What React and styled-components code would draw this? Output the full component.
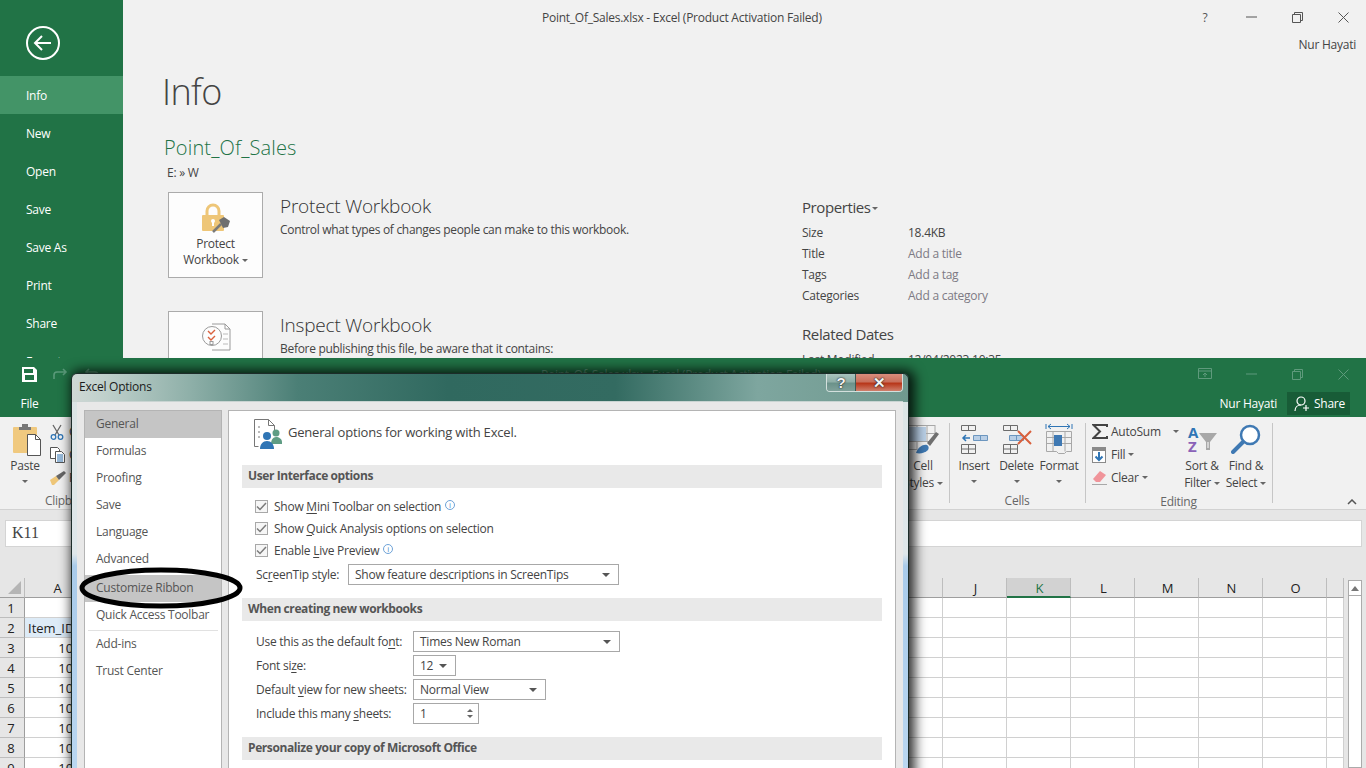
import React from "react";
import styled, { createGlobalStyle } from "styled-components";

const GlobalStyle = createGlobalStyle`
  html, body {
    margin: 0;
    padding: 0;
    width: 1366px;
    height: 768px;
    overflow: hidden;
    background: #f1f1f1;
  }
  * {
    box-sizing: border-box;
  }
  body {
    font-family: "Open Sans", "Noto Sans", "Liberation Sans", sans-serif;
    font-size: 12px;
    letter-spacing: -0.25px;
    color: #444;
  }
  u {
    text-underline-offset: 2px;
  }
`;

const Screen = styled.div`
  position: relative;
  width: 1366px;
  height: 768px;
  overflow: hidden;
  display: flex;
  flex-direction: column;
`;

/* backstage window */
const Backstage = styled.div`
  height: 358px;
  flex: none;
  display: flex;
  overflow: hidden;
  background: #f1f1f1;
`;

const Sidebar = styled.nav`
  width: 123px;
  flex: none;
  background: #217346;
  color: #fff;
  display: flex;
  flex-direction: column;
`;

const BackButton = styled.div`
  height: 76px;
  flex: none;
  padding: 26px 0 0 26px;
`;

const SideItem = styled.div`
  height: 38px;
  flex: none;
  padding-left: 26px;
  line-height: 40px;
  font-size: 12px;
  background: ${(p) => (p.$active ? "#439467" : "transparent")};
`;

const BackMain = styled.div`
  flex: 1;
  min-width: 0;
  display: flex;
  flex-direction: column;
`;

const BackTitleBar = styled.div`
  height: 34px;
  flex: none;
  display: flex;
  align-items: center;
  justify-content: space-between;
  padding-left: 419px;
`;

const WindowTitle = styled.div`
  font-size: 12px;
  color: #444;
  white-space: nowrap;
`;

const Controls = styled.div`
  display: flex;
  color: ${(p) => p.$color};
`;

const ControlButton = styled.div`
  width: 46px;
  height: 30px;
  display: flex;
  align-items: center;
  justify-content: center;
`;

const UserName = styled.div`
  height: 22px;
  line-height: 22px;
  flex: none;
  text-align: right;
  padding-right: 10px;
  white-space: nowrap;
`;

const InfoBody = styled.div`
  padding: 14px 0 0 39px;
  flex: none;
`;

const InfoHeading = styled.h1`
  margin: 0;
  font-weight: 300;
  font-size: 36px;
  line-height: 44px;
  letter-spacing: -0.6px;
  color: #444;
`;

const FileName = styled.h2`
  margin: 20px 0 0 2px;
  font-weight: 300;
  font-size: 20px;
  line-height: 28px;
  letter-spacing: 0.15px;
  color: #217346;
`;

const FilePath = styled.div`
  margin: 3px 0 0 5px;
  height: 19px;
  line-height: 16px;
  font-size: 12px;
`;

const InfoColumns = styled.div`
  margin-top: 8px;
  display: flex;
`;

const InfoLeft = styled.div`
  width: 640px;
  flex: none;
  padding-left: 6px;
  display: flex;
  flex-direction: column;
  gap: 33px;
`;

const InfoRow = styled.div`
  display: flex;
  gap: 17px;
`;

const ActionBox = styled.div`
  width: 95px;
  height: 86px;
  flex: none;
  background: #fdfdfd;
  border: 1px solid #ababab;
  display: flex;
  flex-direction: column;
  align-items: center;
  padding-top: 10px;
  line-height: 16px;
  text-align: center;
`;

const ActionIcon = styled.div`
  height: 33px;
  flex: none;
`;

const InfoRowHeading = styled.div`
  font-size: 19px;
  font-weight: 300;
  line-height: 28px;
  letter-spacing: -0.2px;
  color: #333;
`;

const InfoRowText = styled.div`
  margin-top: 2px;
  line-height: 16px;
  letter-spacing: -0.3px;
`;

const InfoRight = styled.div`
  padding-top: 3px;
`;

const PropHeading = styled.div`
  font-size: 15px;
  line-height: 24px;
  letter-spacing: -0.4px;
  color: #444;
  margin-top: ${(p) => p.$top || 0}px;
`;

const PropList = styled.div`
  margin-top: 3px;
  display: grid;
  grid-template-columns: 106px auto;
  grid-auto-rows: 21px;
  line-height: 21px;
`;

const PropValue = styled.span`
  color: ${(p) => (p.$plain ? "#444" : "#7d7a84")};
`;

/* excel window */
const ExcelWindow = styled.div`
  flex: 1;
  min-height: 0;
  display: flex;
  flex-direction: column;
  background: #e6e6e6;
  overflow: hidden;
`;

const GreenBar = styled.div`
  height: 59px;
  flex: none;
  background: #217346;
  color: #fff;
  display: flex;
  flex-direction: column;
`;

const GreenTop = styled.div`
  height: 32px;
  flex: none;
  display: flex;
  align-items: center;
  justify-content: space-between;
`;

const QuickAccess = styled.div`
  display: flex;
  align-items: center;
  gap: 16px;
  padding-left: 22px;
`;

const FadedTitle = styled.div`
  color: #5f9a7c;
  white-space: nowrap;
  margin-left: 442px;
  flex: 1;
`;

const GreenBottom = styled.div`
  height: 27px;
  flex: none;
  display: flex;
  align-items: center;
  justify-content: space-between;
  padding-right: 16px;
`;

const FileTab = styled.div`
  width: 59px;
  text-align: center;
  line-height: 27px;
`;

const AccountBox = styled.div`
  display: flex;
  align-items: center;
  gap: 10px;
`;

const ShareButton = styled.div`
  width: 63px;
  height: 23px;
  background: #185c37;
  display: flex;
  align-items: center;
  gap: 4px;
  padding-left: 7px;
`;

const Ribbon = styled.div`
  height: 93px;
  flex: none;
  background: #f1f1f1;
  border-bottom: 1px solid #d2d2d2;
  display: flex;
  position: relative;
`;

const RibbonGroup = styled.div`
  width: ${(p) => p.$w}px;
  flex: none;
  display: flex;
  flex-direction: column;
  position: relative;
  &::after {
    content: "";
    display: ${(p) => (p.$sep ? "block" : "none")};
    position: absolute;
    right: 0;
    top: 6px;
    bottom: 6px;
    width: 1px;
    background: #c6c6c6;
  }
`;

const GroupBody = styled.div`
  flex: 1;
  display: flex;
  padding: 3px 0 0 ${(p) => p.$pad || 0}px;
`;

const GroupLabel = styled.div`
  height: 19px;
  flex: none;
  padding-right: 2px;
  line-height: 22px;
  text-align: center;
  color: #666;
`;

const RibbonGap = styled.div`
  flex: ${(p) => (p.$w ? `0 0 ${p.$w}px` : "1")};
`;

const BigButton = styled.div`
  width: ${(p) => p.$w}px;
  flex: none;
  display: flex;
  flex-direction: column;
  align-items: center;
  line-height: 17px;
  text-align: center;
  white-space: nowrap;
`;

const BigIcon = styled.div`
  height: 37px;
  flex: none;
  display: flex;
  align-items: center;
  justify-content: center;
`;

const SmallColumn = styled.div`
  width: ${(p) => p.$w}px;
  flex: none;
  display: flex;
  flex-direction: column;
`;

const SmallRow = styled.div`
  height: 23px;
  flex: none;
  display: flex;
  align-items: center;
  white-space: nowrap;
`;

const SmallIcon = styled.div`
  width: 19px;
  flex: none;
  display: flex;
  align-items: center;
`;

const Caret = styled.span`
  display: inline-block;
  width: 0;
  height: 0;
  margin-left: ${(p) => p.$left ?? 3}px;
  vertical-align: middle;
  border-left: 3px solid transparent;
  border-right: 3px solid transparent;
  border-top: 3px solid #666;
`;

const DropCaret = styled(Caret)`
  margin: 6px 0 0 0;
`;

const CollapseCaret = styled.svg`
  position: absolute;
  right: 9px;
  bottom: 4px;
`;

const FormulaArea = styled.div`
  height: 68px;
  flex: none;
  padding: 10px 4px 0 5px;
`;

const FormulaBar = styled.div`
  height: 27px;
  background: #fff;
  border: 1px solid #d4d4d4;
  padding-left: 6px;
  font-family: "Liberation Serif", serif;
  font-size: 16px;
  line-height: 24px;
  letter-spacing: 0;
  color: #444;
`;

const SheetArea = styled.div`
  flex: 1;
  min-height: 0;
  display: flex;
  overflow: hidden;
`;

const SheetGrid = styled.div`
  width: 1344px;
  flex: none;
  display: grid;
  grid-template-columns: 25px 64px repeat(8, 106.75px) repeat(6, 64px) 17px;
  grid-auto-rows: 20px;
  font-size: 13px;
  letter-spacing: 0;
  color: #222;
`;

const Corner = styled.div`
  background: #e6e6e6;
  border-right: 1px solid #bdbdbd;
  border-bottom: 1px solid #9e9e9e;
  display: flex;
  align-items: flex-end;
  justify-content: flex-end;
  padding: 0 3px 3px 0;
`;

const ColHead = styled.div`
  text-align: center;
  line-height: 20px;
  padding-left: 2px;
  background: ${(p) => (p.$on ? "#d2d2d2" : "#e6e6e6")};
  color: ${(p) => (p.$on ? "#217346" : "#222")};
  border-right: 1px solid #bdbdbd;
  border-bottom: ${(p) => (p.$on ? "2px solid #217346" : "1px solid #9e9e9e")};
`;

const RowHead = styled.div`
  text-align: center;
  line-height: 21px;
  padding-right: 2px;
  background: #e6e6e6;
  border-right: 1px solid #9e9e9e;
  border-bottom: 1px solid #bdbdbd;
`;

const Cell = styled.div`
  background: ${(p) => (p.$tint ? "#ddebf7" : "#fff")};
  border-right: 1px solid #d0d0d0;
  border-bottom: 1px solid #d0d0d0;
  line-height: 21px;
  padding: 0 0 0 3px;
  text-align: ${(p) => (p.$right ? "right" : "left")};
  white-space: nowrap;
  overflow: hidden;
`;

const ScrollTrack = styled.div`
  width: 14px;
  margin: 2px 0 0 4px;
  flex: none;
  background: #fff;
  border: 1px solid #ababab;
`;

const ScrollUp = styled.div`
  height: 15px;
  border-bottom: 1px solid #ababab;
  display: flex;
  align-items: center;
  justify-content: center;
`;

/* options dialog */
const Dialog = styled.div`
  position: absolute;
  left: 71px;
  top: 373px;
  width: 838px;
  height: 420px;
  border-radius: 6px 6px 0 0;
  border: 1px solid #1c2c29;
  border-bottom: 0;
  box-shadow: 3px 0 12px 3px rgba(0, 0, 0, 0.8);
  padding: 0 5px;
  background:
    linear-gradient(90deg, #cfd8d5 0, #bfd0cb 4%, #8fb0a9 14%, #4b7f76 27%, #30695f 45%, #336b61 65%, #7ea69f 82%, #70998f 100%) top / 100% 28px no-repeat,
    linear-gradient(180deg, #dbe4e4 0, #dfe7ea 180px, #a9cbea 192px, #bcd8f1 100%);
  display: flex;
  flex-direction: column;
`;

const DialogTitleBar = styled.div`
  height: 27px;
  flex: none;
  display: flex;
  justify-content: space-between;
  padding-left: 2px;
`;

const DialogTitle = styled.div`
  font-size: 12px;
  line-height: 25px;
  color: #1b1b1b;
`;

const CaptionButtons = styled.div`
  display: flex;
  height: 18px;
  border: 1px solid #d3e0dd;
  border-top: 0;
  border-radius: 0 0 4px 4px;
  overflow: hidden;
`;

const CaptionButton = styled.div`
  width: ${(p) => p.$w}px;
  display: flex;
  align-items: center;
  justify-content: center;
  font-family: "Liberation Sans", sans-serif;
  font-weight: 700;
  font-size: 15px;
  letter-spacing: 0;
  color: #f4f4f4;
  text-shadow: 0 0 1px #222, 0 0 2px #222;
  background: ${(p) =>
    p.$danger
      ? "linear-gradient(180deg, #d98d7c 0, #c9705c 45%, #b8371a 55%, #cf7f6c 100%)"
      : "linear-gradient(180deg, #a9c3bd 0, #8fafa8 45%, #6b928a 55%, #7fa19a 100%)"};
  border-left: ${(p) => (p.$danger ? "1px solid #3f5a55" : "0")};
`;

const DialogClient = styled.div`
  flex: 1;
  min-height: 0;
  background: #e8e8e8;
  border-top: 1px solid #c9d4d2;
  display: flex;
  gap: 6px;
  padding: 8px 7px 0 7px;
`;

const NavPanel = styled.div`
  width: 138px;
  flex: none;
  background: #fff;
  border: 1px solid #b4b4b4;
  border-bottom: 0;
`;

const NavItem = styled.div`
  height: 27px;
  line-height: 26px;
  padding-left: 11px;
  color: #555;
  background: ${(p) => (p.$active ? "#c5c5c5" : "transparent")};
`;

const NavGroup = styled.div`
  margin-top: ${(p) => p.$top || 0}px;
`;

const NavRule = styled.div`
  height: 1px;
  margin: 1px 3px 0 3px;
  background: #e1e1e1;
`;

const Highlight = styled.svg`
  position: absolute;
  left: 6px;
  top: 192px;
  pointer-events: none;
`;

const ContentPanel = styled.div`
  flex: 1;
  min-width: 0;
  background: #fff;
  border: 1px solid #b4b4b4;
  border-bottom: 0;
  padding: 7px 13px 0 13px;
  color: #444;
`;

const ContentHeading = styled.div`
  height: 47px;
  display: flex;
  gap: 5px;
  padding-left: 12px;
  font-size: 13px;
  line-height: 29px;
  letter-spacing: -0.2px;
`;

const SectionBar = styled.div`
  height: 23px;
  background: #e9e9e9;
  padding-left: 6px;
  line-height: 22px;
  font-weight: 700;
  letter-spacing: -0.4px;
  color: #555;
  margin-top: ${(p) => p.$top || 0}px;
`;

const CheckList = styled.div`
  padding: 7px 0 0 13px;
  display: flex;
  flex-direction: column;
`;

const CheckRow = styled.div`
  height: 22px;
  display: flex;
  align-items: center;
  gap: 6px;
`;

const CheckBox = styled.div`
  width: 13px;
  height: 13px;
  flex: none;
  background: #f6f6f6;
  border: 1px solid #a8a8a8;
  display: flex;
  align-items: center;
  justify-content: center;
`;

const InfoDot = styled.span`
  width: 10px;
  height: 10px;
  margin: -3px 0 0 -2px;
  flex: none;
  border: 1px solid #6ea3d8;
  border-radius: 50%;
  color: #4a8bcb;
  font-size: 8px;
  line-height: 8px;
  text-align: center;
  letter-spacing: 0;
`;

const FormGrid = styled.div`
  display: grid;
  grid-template-columns: ${(p) => p.$label}px auto;
  justify-content: start;
  align-items: center;
  row-gap: 3px;
  padding: ${(p) => p.$top}px 0 0 14px;
`;

const SelectBox = styled.div`
  width: ${(p) => p.$w}px;
  height: 21px;
  background: #fff;
  border: 1px solid #a8a8a8;
  padding: 0 8px 0 6px;
  display: flex;
  align-items: center;
  justify-content: space-between;
  white-space: nowrap;
`;

const SelectArrow = styled.span`
  width: 0;
  height: 0;
  flex: none;
  border-left: 4px solid transparent;
  border-right: 4px solid transparent;
  border-top: 4px solid #555;
`;

const SpinArrows = styled.span`
  display: flex;
  flex-direction: column;
  gap: 3px;
  margin-right: -3px;
`;

const SpinArrow = styled.span`
  width: 0;
  height: 0;
  border-left: 3px solid transparent;
  border-right: 3px solid transparent;
  border-bottom: ${(p) => (p.$up ? "3px solid #666" : "0")};
  border-top: ${(p) => (p.$up ? "0" : "3px solid #666")};
`;

const WinIcons = {
  help: <span>?</span>,
  layout: (
    <svg width="14" height="12" viewBox="0 0 14 12" fill="none" stroke="currentColor">
      <path d="M.5.5h13v10H.5zM.5 3h13M7 9V5M5 7l2-2 2 2" />
    </svg>
  ),
  min: (
    <svg width="11" height="2" viewBox="0 0 11 2" stroke="currentColor">
      <path d="M0 1h11" />
    </svg>
  ),
  restore: (
    <svg width="11" height="11" viewBox="0 0 11 11" fill="none" stroke="currentColor">
      <path d="M.5 2.5h8v8h-8zM2.5 2.5v-2h8v8h-2" />
    </svg>
  ),
  close: (
    <svg width="11" height="11" viewBox="0 0 11 11" stroke="currentColor">
      <path d="M.5.5l10 10M10.5.5l-10 10" />
    </svg>
  ),
};

const BackArrow = () => (
  <svg width="34" height="34" viewBox="0 0 34 34" fill="none" stroke="#fff">
    <circle cx="17" cy="17" r="16" strokeWidth="2" />
    <path d="M9 17h16M16 10l-7 7 7 7" strokeWidth="2" />
  </svg>
);

const LockKey = () => (
  <svg width="32" height="31" viewBox="0 0 32 31">
    <path d="M7 13V8a6 6 0 0 1 12 0v5" fill="none" stroke="#eec678" strokeWidth="3" />
    <rect x="2" y="12" width="22" height="16" rx="1" fill="#eec678" />
    <circle cx="13" cy="18" r="2" fill="#fff" />
    <rect x="12" y="18" width="2" height="5" fill="#fff" />
    <path d="M13 29l8-8" stroke="#7a7a7a" strokeWidth="2.5" />
    <path d="M19 17l5-3 6 4-2 6-5 1z" fill="#6f6f6f" />
  </svg>
);

const InspectDoc = () => (
  <svg width="30" height="30" viewBox="0 0 30 30" fill="none">
    <path d="M11 2h13l5 5v21H11" stroke="#9a9a9a" />
    <path d="M24 2v5h5" stroke="#9a9a9a" />
    <circle cx="11" cy="14" r="9.5" fill="#fdfdfd" stroke="#9a9a9a" />
    <path d="M7 9l3 3 4-4M7 15l3 3 4-4" stroke="#d9603d" strokeWidth="1.4" />
    <rect x="9" y="19.5" width="3" height="3" stroke="#9a9a9a" />
    <path d="M22 12h5M22 17h5M22 22h5" stroke="#bbb" />
  </svg>
);

const SaveIcon = () => (
  <svg width="15" height="15" viewBox="0 0 15 15">
    <path d="M0 0h12l3 3v12H0z" fill="#fff" />
    <rect x="2" y="2" width="9" height="4" fill="#217346" />
    <rect x="3" y="8" width="9" height="5" fill="#217346" />
  </svg>
);

const FadedArrow = ({ flip }) => (
  <svg width="15" height="12" viewBox="0 0 15 12" fill="none" stroke="#5a9a7a" strokeWidth="1.6">
    <path d={flip ? "M14 11V7a3 3 0 0 0-3-3H2M5 1L2 4l3 3" : "M1 11V7a3 3 0 0 1 3-3h9M10 1l3 3-3 3"} />
  </svg>
);

const ShareIcon = () => (
  <svg width="16" height="16" viewBox="0 0 16 16" fill="none" stroke="#fff" strokeWidth="1.2">
    <circle cx="7" cy="5" r="4" />
    <path d="M1 15c0-4 3-6 6-6M9 12h6M12 9v6" />
  </svg>
);

const PasteIcon = () => (
  <svg width="34" height="34" viewBox="-4 0 34 34">
    <rect x="1" y="5" width="24" height="26" rx="1" fill="#f0c97f" />
    <path d="M7 5h12v3H7zM10 2h6v3h-6z" fill="#777" />
    <path d="M15.500 12.500h8l5 5v16h-13z" fill="#fff" stroke="#555" />
    <path d="M23.500 12.500v5h5" fill="none" stroke="#555" />
  </svg>
);

const CutIcon = () => (
  <svg width="14" height="16" viewBox="0 0 14 16" fill="none">
    <path d="M3 1l6 10M11 1L5 11" stroke="#666" strokeWidth="1.3" />
    <circle cx="3.500" cy="13" r="2.300" stroke="#2f75b5" strokeWidth="1.3" />
    <circle cx="10.500" cy="13" r="2.300" stroke="#2f75b5" strokeWidth="1.3" />
  </svg>
);

const CopyIcon = () => (
  <svg width="15" height="16" viewBox="0 0 15 16" fill="#fff" stroke="#555">
    <path d="M.5.5h7l2 2v9h-9z" />
    <path d="M5.500 4.500h6l3 3v8h-9z" />
    <path d="M7 8h6M7 10h6M7 12h6M7 14h6" stroke="#2f75b5" />
  </svg>
);

const BrushIcon = () => (
  <svg width="16" height="14" viewBox="0 0 16 14">
    <path d="M0 9l6-4 3 4-5 5H2z" fill="#eec678" />
    <path d="M6 5l8-5 2 2-7 7z" fill="#666" />
  </svg>
);

const StylesIcon = () => (
  <svg width="34" height="34" viewBox="0 0 34 34" fill="none">
    <path d="M1 3.500h28M1 11.500h28M1 19.500h22M1 27.500h10M1 3v25M11 3v25M21 3v17M29 3v10" stroke="#a8a8a8" />
    <rect x="2" y="5" width="18" height="14" fill="#b9cfe6" />
    <path d="M21 21l9-11 3 2-9 12z" fill="#6f6f6f" />
    <path d="M10 31c2-6 7-9 11-8 2 1 2 3 1 5-3 3-8 4-12 3z" fill="#3f79b3" />
  </svg>
);

const InsertIcon = () => (
  <svg width="28" height="30" viewBox="0 0 28 30" fill="none" stroke="#6c6c6c">
    <path d="M1.500 1.500h14v5h-14zM8.500 1.500v5" />
    <path d="M13.500 11.500h14v5h-14zM20.500 11.500v5" fill="#b9cfe6" stroke="#6c96bf" />
    <path d="M10 14H3M6 11l-3 3 3 3" stroke="#2f75b5" strokeWidth="1.5" />
    <path d="M1.500 20.500h14v9h-14zM8.500 20.500v9M1.500 25h14" />
  </svg>
);

const DeleteIcon = () => (
  <svg width="30" height="30" viewBox="0 0 30 30" fill="none" stroke="#6c6c6c">
    <path d="M1.500 1.500h14v5h-14zM8.500 1.500v5" />
    <path d="M7.500 11.500h14v5h-14zM14.500 11.500v5" fill="#b9cfe6" stroke="#6c96bf" />
    <path d="M1.500 20.500h14v9h-14zM8.500 20.500v9M1.500 25h14" />
    <path d="M16 7l13 13M29 7L16 20" stroke="#d9603d" strokeWidth="2" />
  </svg>
);

const FormatIcon = () => (
  <svg width="28" height="32" viewBox="0 0 28 32" fill="none">
    <path d="M1 1v5M27 1v5" stroke="#2f75b5" />
    <path d="M3 3.500h22M6 1l-3 2.500L6 6M22 1l3 2.500L22 6" stroke="#2f75b5" />
    <path d="M1.500 8.500h25v20h-5l-2 2h-6l-2-2h-10zM1.500 14.500h25M1.500 20.500h25M8 8.500v20M20 8.500v20" stroke="#a8a8a8" />
    <rect x="9" y="12" width="8" height="11" fill="#3f79b3" />
  </svg>
);

const FillIcon = () => (
  <svg width="14" height="16" viewBox="0 0 14 16" fill="none">
    <rect x=".5" y=".5" width="13" height="15" fill="#fff" stroke="#8a8a8a" />
    <rect x="1" y="1" width="12" height="3" fill="#8a8a8a" />
    <path d="M7 5v8M3.500 9.500L7 13l3.500-3.500" stroke="#2f75b5" strokeWidth="2" />
  </svg>
);

const EraserIcon = () => (
  <svg width="15" height="14" viewBox="0 0 15 14">
    <path d="M1 8l7-8 6 4-6 7H4z" fill="#f0949a" />
    <path d="M0 13.500h15" stroke="#a8a8a8" />
  </svg>
);

const SigmaIcon = () => (
  <svg width="16" height="15" viewBox="0 0 16 15" fill="none" stroke="#444" strokeWidth="2">
    <path d="M15 3V1H1.500L8 7.500 1.500 14H15v-2" />
  </svg>
);

const SortIcon = () => (
  <svg width="31" height="30" viewBox="0 0 31 30">
    <text x="1" y="14" fontFamily="Open Sans, sans-serif" fontWeight="700" fontSize="15" fill="#2f75b5">A</text>
    <text x="1" y="28" fontFamily="Open Sans, sans-serif" fontWeight="700" fontSize="15" fill="#8a62b8">Z</text>
    <path d="M12 9h18l-7 9v8h-4v-8z" fill="#a8a8a8" />
    <path d="M21 18v6" stroke="#fff" />
  </svg>
);

const FindIcon = () => (
  <svg width="30" height="30" viewBox="0 0 30 30" fill="none" stroke="#3f79b3">
    <circle cx="19" cy="11" r="9" strokeWidth="2.5" fill="#fff" />
    <path d="M12 18L2 28" strokeWidth="4" strokeLinecap="round" />
  </svg>
);

const GeneralIcon = () => (
  <svg width="29" height="31" viewBox="0 0 29 31" fill="none">
    <path d="M.5 1.500h14l6 6v6M.5 1.500v27h4" stroke="#777" />
    <path d="M14.500 1.500v6h6" stroke="#777" />
    <path d="M4 9h2M4 14h2M4 19h2" stroke="#777" />
    <circle cx="22" cy="15" r="3.500" fill="#5f9d84" />
    <path d="M17 26c0-4 2-7 5-7s6 2 6 5v2z" fill="#5f9d84" />
    <circle cx="13" cy="18" r="4" fill="#2f75b5" />
    <path d="M6 31c0-5 3-8 7-8s7 3 7 8z" fill="#2f75b5" />
  </svg>
);

const Check = () => (
  <svg width="11" height="9" viewBox="0 0 11 9" fill="none" stroke="#7b7b7b" strokeWidth="1.5">
    <path d="M1 4.500l3 3 6-6.500" />
  </svg>
);

const sideItems = ["New", "Open", "Save", "Save As", "Print", "Share", "Export"];

const properties = [
  ["Size", "18.4KB", true],
  ["Title", "Add a title"],
  ["Tags", "Add a tag"],
  ["Categories", "Add a category"],
];

const columns = ["A", "B", "C", "D", "E", "F", "G", "H", "I", "J", "K", "L", "M", "N", "O", ""];

const sheetRows = [1, 2, 3, 4, 5, 6, 7, 8, 9];

function cellText(row, col) {
  if (col !== 0) return "";
  if (row === 2) return "Item_ID";
  if (row > 2) return String(1000 + row - 2);
  return "";
}

function WindowButtons({ color, first }) {
  return (
    <Controls $color={color}>
      <ControlButton>{first}</ControlButton>
      <ControlButton>{WinIcons.min}</ControlButton>
      <ControlButton>{WinIcons.restore}</ControlButton>
      <ControlButton>{WinIcons.close}</ControlButton>
    </Controls>
  );
}

export default function App() {
  return (
    <Screen>
      <GlobalStyle />

      <Backstage>
        <Sidebar>
          <BackButton>
            <BackArrow />
          </BackButton>
          <SideItem $active>Info</SideItem>
          {sideItems.map((item) => (
            <SideItem key={item}>{item}</SideItem>
          ))}
        </Sidebar>

        <BackMain>
          <BackTitleBar>
            <WindowTitle>Point_Of_Sales.xlsx - Excel (Product Activation Failed)</WindowTitle>
            <WindowButtons color="#555" first={WinIcons.help} />
          </BackTitleBar>
          <UserName>Nur Hayati</UserName>

          <InfoBody>
            <InfoHeading>Info</InfoHeading>
            <FileName>Point_Of_Sales</FileName>
            <FilePath>E: » W</FilePath>

            <InfoColumns>
              <InfoLeft>
                <InfoRow>
                  <ActionBox>
                    <ActionIcon>
                      <LockKey />
                    </ActionIcon>
                    <span>Protect</span>
                    <span>
                      Workbook
                      <Caret />
                    </span>
                  </ActionBox>
                  <div>
                    <InfoRowHeading>Protect Workbook</InfoRowHeading>
                    <InfoRowText>Control what types of changes people can make to this workbook.</InfoRowText>
                  </div>
                </InfoRow>
                <InfoRow>
                  <ActionBox>
                    <ActionIcon>
                      <InspectDoc />
                    </ActionIcon>
                  </ActionBox>
                  <div>
                    <InfoRowHeading>Inspect Workbook</InfoRowHeading>
                    <InfoRowText>Before publishing this file, be aware that it contains:</InfoRowText>
                  </div>
                </InfoRow>
              </InfoLeft>

              <InfoRight>
                <PropHeading>
                  Properties
                  <Caret $left={1} />
                </PropHeading>
                <PropList>
                  {properties.map(([label, value, plain]) => (
                    <React.Fragment key={label}>
                      <span>{label}</span>
                      <PropValue $plain={plain}>{value}</PropValue>
                    </React.Fragment>
                  ))}
                </PropList>
                <PropHeading $top={16}>Related Dates</PropHeading>
                <PropList>
                  <span>Last Modified</span>
                  <span>12/04/2023 10:35</span>
                </PropList>
              </InfoRight>
            </InfoColumns>
          </InfoBody>
        </BackMain>
      </Backstage>

      <ExcelWindow>
        <GreenBar>
          <GreenTop>
            <QuickAccess>
              <SaveIcon />
              <FadedArrow />
              <FadedArrow flip />
            </QuickAccess>
            <FadedTitle>Point_Of_Sales.xlsx - Excel (Product Activation Failed)</FadedTitle>
            <WindowButtons color="#5f9a7c" first={WinIcons.layout} />
          </GreenTop>
          <GreenBottom>
            <FileTab>File</FileTab>
            <AccountBox>
              <span>Nur Hayati</span>
              <ShareButton>
                <ShareIcon />
                Share
              </ShareButton>
            </AccountBox>
          </GreenBottom>
        </GreenBar>

        <Ribbon>
          <RibbonGroup $w={144}>
            <GroupBody>
              <BigButton $w={50}>
                <BigIcon>
                  <PasteIcon />
                </BigIcon>
                Paste
                <DropCaret />
              </BigButton>
              <SmallColumn $w={90}>
                <SmallRow>
                  <SmallIcon>
                    <CutIcon />
                  </SmallIcon>
                  Cut
                </SmallRow>
                <SmallRow>
                  <SmallIcon>
                    <CopyIcon />
                  </SmallIcon>
                  Copy
                </SmallRow>
                <SmallRow>
                  <SmallIcon>
                    <BrushIcon />
                  </SmallIcon>
                  Format Painter
                </SmallRow>
              </SmallColumn>
            </GroupBody>
            <GroupLabel>Clipboard</GroupLabel>
          </RibbonGroup>

          <RibbonGap />

          <RibbonGroup $w={120} $sep>
            <GroupBody $pad={61}>
              <BigButton $w={64}>
                <BigIcon>
                  <StylesIcon />
                </BigIcon>
                Cell
                <span>
                  Styles
                  <Caret />
                </span>
              </BigButton>
            </GroupBody>
            <GroupLabel>Styles</GroupLabel>
          </RibbonGroup>

          <RibbonGroup $w={136} $sep>
            <GroupBody $pad={3}>
              <BigButton $w={42}>
                <BigIcon>
                  <InsertIcon />
                </BigIcon>
                Insert
                <DropCaret />
              </BigButton>
              <BigButton $w={43}>
                <BigIcon>
                  <DeleteIcon />
                </BigIcon>
                Delete
                <DropCaret />
              </BigButton>
              <BigButton $w={42}>
                <BigIcon>
                  <FormatIcon />
                </BigIcon>
                Format
                <DropCaret />
              </BigButton>
            </GroupBody>
            <GroupLabel>Cells</GroupLabel>
          </RibbonGroup>

          <RibbonGroup $w={187} $sep>
            <GroupBody $pad={6}>
              <SmallColumn $w={88}>
                <SmallRow>
                  <SmallIcon>
                    <SigmaIcon />
                  </SmallIcon>
                  AutoSum
                  <Caret $left={12} />
                </SmallRow>
                <SmallRow>
                  <SmallIcon>
                    <FillIcon />
                  </SmallIcon>
                  Fill
                  <Caret />
                </SmallRow>
                <SmallRow>
                  <SmallIcon>
                    <EraserIcon />
                  </SmallIcon>
                  Clear
                  <Caret />
                </SmallRow>
              </SmallColumn>
              <BigButton $w={44}>
                <BigIcon>
                  <SortIcon />
                </BigIcon>
                Sort &amp;
                <span>
                  Filter
                  <Caret />
                </span>
              </BigButton>
              <BigButton $w={44}>
                <BigIcon>
                  <FindIcon />
                </BigIcon>
                Find &amp;
                <span>
                  Select
                  <Caret />
                </span>
              </BigButton>
            </GroupBody>
            <GroupLabel>Editing</GroupLabel>
          </RibbonGroup>

          <RibbonGap $w={93} />
          <CollapseCaret width="10" height="6" viewBox="0 0 10 6" fill="none" stroke="#555" strokeWidth="1.500">
            <path d="M1 5l4-4 4 4" />
          </CollapseCaret>
        </Ribbon>

        <FormulaArea>
          <FormulaBar>K11</FormulaBar>
        </FormulaArea>

        <SheetArea>
          <SheetGrid>
            <Corner>
              <svg width="13" height="13" viewBox="0 0 13 13">
                <path d="M13 0v13H0z" fill="#b5b5b5" />
              </svg>
            </Corner>
            {columns.map((col, i) => (
              <ColHead key={i} $on={col === "K"}>
                {col}
              </ColHead>
            ))}
            {sheetRows.map((row) => (
              <React.Fragment key={row}>
                <RowHead>{row}</RowHead>
                {columns.map((col, i) => (
                  <Cell key={i} $tint={row === 2 && i === 0} $right={row > 2}>
                    {cellText(row, i)}
                  </Cell>
                ))}
              </React.Fragment>
            ))}
          </SheetGrid>
          <ScrollTrack>
            <ScrollUp>
              <svg width="8" height="5" viewBox="0 0 8 5">
                <path d="M4 0l4 5H0z" fill="#777" />
              </svg>
            </ScrollUp>
          </ScrollTrack>
        </SheetArea>
      </ExcelWindow>

      <Dialog>
        <DialogTitleBar>
          <DialogTitle>Excel Options</DialogTitle>
          <CaptionButtons>
            <CaptionButton $w={28}>?</CaptionButton>
            <CaptionButton $w={47} $danger>
              ✕
            </CaptionButton>
          </CaptionButtons>
        </DialogTitleBar>

        <DialogClient>
          <NavPanel>
            <NavGroup>
              <NavItem $active>General</NavItem>
              <NavItem>Formulas</NavItem>
              <NavItem>Proofing</NavItem>
              <NavItem>Save</NavItem>
              <NavItem>Language</NavItem>
              <NavItem>Advanced</NavItem>
            </NavGroup>
            <NavGroup $top={2}>
              <NavItem $active>Customize Ribbon</NavItem>
              <NavItem>Quick Access Toolbar</NavItem>
            </NavGroup>
            <NavRule />
            <NavGroup>
              <NavItem>Add-ins</NavItem>
              <NavItem>Trust Center</NavItem>
            </NavGroup>
          </NavPanel>

          <ContentPanel>
            <ContentHeading>
              <GeneralIcon />
              General options for working with Excel.
            </ContentHeading>

            <SectionBar>User Interface options</SectionBar>
            <CheckList>
              <CheckRow>
                <CheckBox>
                  <Check />
                </CheckBox>
                <span>
                  Show <u>M</u>ini Toolbar on selection
                </span>
                <InfoDot>i</InfoDot>
              </CheckRow>
              <CheckRow>
                <CheckBox>
                  <Check />
                </CheckBox>
                <span>
                  Show <u>Q</u>uick Analysis options on selection
                </span>
              </CheckRow>
              <CheckRow>
                <CheckBox>
                  <Check />
                </CheckBox>
                <span>
                  Enable <u>L</u>ive Preview
                </span>
                <InfoDot>i</InfoDot>
              </CheckRow>
            </CheckList>
            <FormGrid $label={92} $top={3}>
              <span>
                Sc<u>r</u>eenTip style:
              </span>
              <SelectBox $w={271}>
                Show feature descriptions in ScreenTips
                <SelectArrow />
              </SelectBox>
            </FormGrid>

            <SectionBar $top={13}>When creating new workbooks</SectionBar>
            <FormGrid $label={157} $top={10}>
              <span>
                Use this as the default fo<u>n</u>t:
              </span>
              <SelectBox $w={207}>
                Times New Roman
                <SelectArrow />
              </SelectBox>
              <span>
                Font si<u>z</u>e:
              </span>
              <SelectBox $w={43}>
                12
                <SelectArrow />
              </SelectBox>
              <span>
                Default <u>v</u>iew for new sheets:
              </span>
              <SelectBox $w={133}>
                Normal View
                <SelectArrow />
              </SelectBox>
              <span>
                Include this many <u>s</u>heets:
              </span>
              <SelectBox $w={66}>
                1
                <SpinArrows>
                  <SpinArrow $up />
                  <SpinArrow />
                </SpinArrows>
              </SelectBox>
            </FormGrid>

            <SectionBar $top={13}>Personalize your copy of Microsoft Office</SectionBar>
          </ContentPanel>
        </DialogClient>

        <Highlight width="168" height="44" viewBox="0 0 168 44" fill="none" stroke="#000">
          <ellipse cx="83" cy="22" rx="79" ry="18" strokeWidth="5" />
          <path d="M8 16C30 5 70 2 110 4" strokeWidth="2.500" />
        </Highlight>
      </Dialog>
    </Screen>
  );
}
